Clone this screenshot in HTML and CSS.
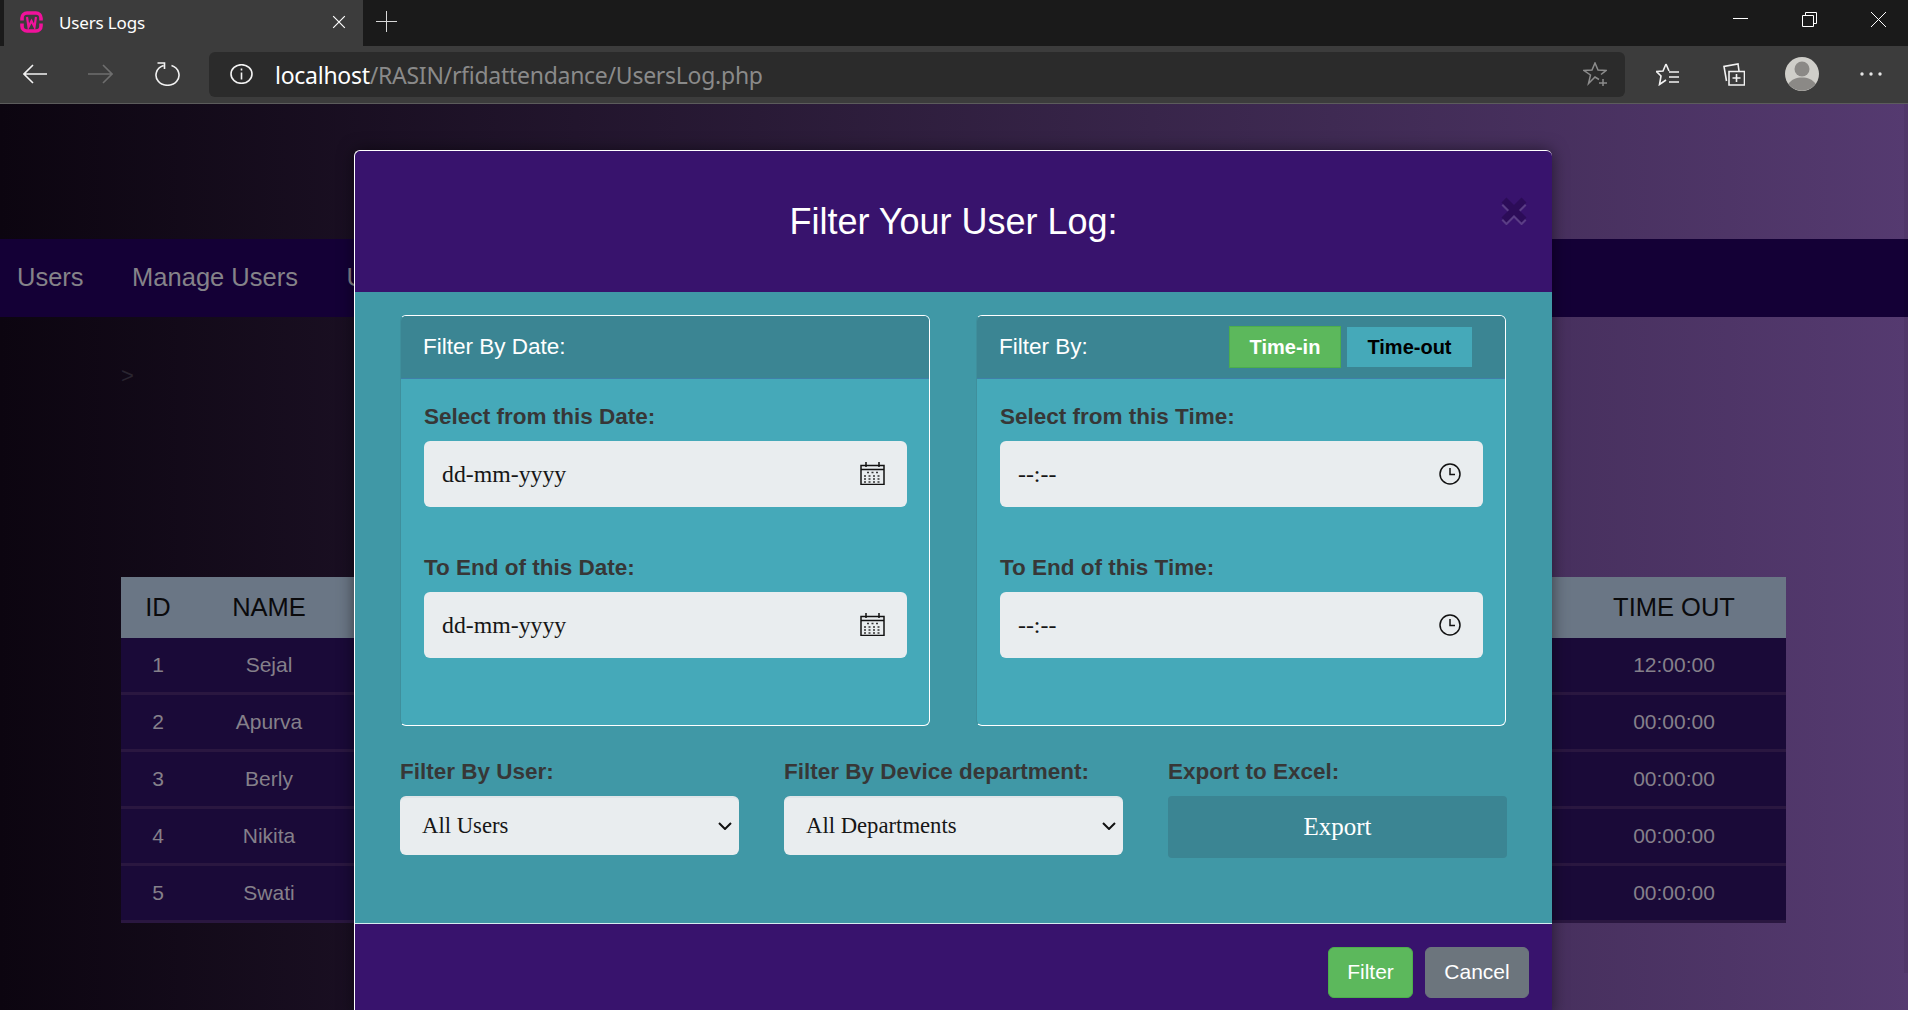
FILE: index.html
```html
<!DOCTYPE html>
<html lang="en">
<head>
<meta charset="utf-8">
<title>Users Logs</title>
<link rel="stylesheet" href="styles.css">
</head>
<body>
<header class="chrome">
  <div class="tabstrip">
    <div class="tab">
      <svg class="favicon" viewBox="0 0 23 22"><path class="fav-ring" d="M2 9.500V7a5 5 0 0 1 5-5h9a5 5 0 0 1 5 5v2.500M2 12.500V15a5 5 0 0 0 5 5h9a5 5 0 0 0 5-5v-2.500"/><path class="fav-w" d="M7 6l1.500 10 3-6 3 6L16 6"/></svg>
      <span class="tab-title">Users Logs</span>
      <svg class="tab-close" viewBox="0 0 12 12"><path class="line-white" d="M1 1l10 10M11 1L1 11"/></svg>
    </div>
    <svg class="new-tab" viewBox="0 0 21 21"><path class="line-light" d="M10.500 0v21M0 10.500h21"/></svg>
    <div class="win-controls">
      <svg class="win-icon" viewBox="0 0 15 15"><path class="line-white" d="M0 6.500h15"/></svg>
      <svg class="win-icon" viewBox="0 0 15 15"><path class="line-white" d="M.5 3.500h11v11H.5zM3.500 3.500V.5h11v11h-3"/></svg>
      <svg class="win-icon" viewBox="0 0 15 15"><path class="line-white" d="M0 0l15 15M15 0L0 15"/></svg>
    </div>
  </div>
  <div class="toolbar">
    <svg class="tb-back" viewBox="0 0 24 20"><path class="line-bright" d="M24 10H1M10 1l-9 9 9 9"/></svg>
    <svg class="tb-forward" viewBox="0 0 25 20"><path class="line-dim" d="M0 10h24M15 1l9 9-9 9"/></svg>
    <svg class="tb-refresh" viewBox="0 0 25 24"><path class="line-bright" d="M8.500 3.500a11.500 10.200 0 1 0 8 0M2.500 1h7v6"/></svg>
    <div class="address">
      <svg class="info" viewBox="0 0 23 20"><ellipse class="line-bright" cx="11.500" cy="10" rx="10.500" ry="9.300"/><path class="line-bright" d="M11.500 8.500v7M11.500 4.500v2"/></svg>
      <span class="url"><span class="url-host">localhost</span>/RASIN/rfidattendance/UsersLog.php</span>
      <svg class="star-add" viewBox="0 0 24 24"><path class="line-gray" d="M16 17.500l-4-2.500-6.500 6.500 2-8.500L1 8.500l8-.5L12 1l3 7 8 .5-5 4M16 21h8M20 17v7"/></svg>
    </div>
    <svg class="tb-fav" viewBox="0 0 23 23"><path class="line-bright" d="M10 1L7 8l-6.500.5L5 13l-1.500 8.500L10 17M10 1l3 7M13 9h10M13 14h10M13 19h10"/></svg>
    <svg class="tb-coll" viewBox="0 0 22 23"><path class="line-bright" d="M6 22V8.500h15.500V22zM13.500 11v8M9.500 15h8M3.500 18L1 3.500 15 1l1 7"/></svg>
    <svg class="tb-avatar" viewBox="0 0 34 34"><circle class="av-bg" cx="17" cy="17" r="17"/><circle class="av-fg" cx="17" cy="12" r="7.500"/><path class="av-fg" d="M3.500 27c3-5 8-6.500 13.500-6.500S27.500 22 30.500 27a17 17 0 0 1-27 0z"/></svg>
    <svg class="tb-more" viewBox="0 0 22 4"><circle class="dot" cx="2" cy="2" r="1.700"/><circle class="dot" cx="11" cy="2" r="1.700"/><circle class="dot" cx="20" cy="2" r="1.700"/></svg>
  </div>
</header>

<main class="page">
  <nav class="nav">
    <span>Users</span>
    <span>Manage Users</span>
    <span>Users Log</span>
  </nav>
  <div class="crumb">&gt;</div>
  <section class="log-table">
    <div class="row row-head"><span>ID</span><span>NAME</span><span></span><span>TIME OUT</span></div>
    <div class="row"><span>1</span><span>Sejal</span><span></span><span>12:00:00</span></div>
    <div class="row"><span>2</span><span>Apurva</span><span></span><span>00:00:00</span></div>
    <div class="row"><span>3</span><span>Berly</span><span></span><span>00:00:00</span></div>
    <div class="row"><span>4</span><span>Nikita</span><span></span><span>00:00:00</span></div>
    <div class="row"><span>5</span><span>Swati</span><span></span><span>00:00:00</span></div>
  </section>
  <div class="scroll-strip"></div>

  <div class="modal">
    <div class="modal-header">
      <h1 class="modal-title">Filter Your User Log:</h1>
      <svg class="modal-close" viewBox="0 0 26 28"><path class="close-shadow" d="M3 6l20 20M23 6L3 26"/><path class="close-main" d="M3 3l20 20M23 3L3 23"/></svg>
    </div>
    <div class="modal-body">
      <div class="panels">
        <section class="panel">
          <div class="panel-head"><span>Filter By Date:</span></div>
          <div class="panel-body">
            <label class="field-label">Select from this Date:</label>
            <div class="field">
              <span>dd-mm-yyyy</span>
              <svg class="cal" viewBox="0 0 25 23"><path class="ico" d="M1 3.500h23v19H1zM1 7.500h23M6 0v5M19 0v5"/><path class="cal-dots" d="M7 10.500h12M4 14h17M4 17h17M4 20h17"/></svg>
            </div>
            <label class="field-label field-label-next">To End of this Date:</label>
            <div class="field">
              <span>dd-mm-yyyy</span>
              <svg class="cal" viewBox="0 0 25 23"><path class="ico" d="M1 3.500h23v19H1zM1 7.500h23M6 0v5M19 0v5"/><path class="cal-dots" d="M7 10.500h12M4 14h17M4 17h17M4 20h17"/></svg>
            </div>
          </div>
        </section>
        <section class="panel">
          <div class="panel-head">
            <span>Filter By:</span>
            <div class="toggle">
              <button class="toggle-in">Time-in</button>
              <button class="toggle-out">Time-out</button>
            </div>
          </div>
          <div class="panel-body">
            <label class="field-label">Select from this Time:</label>
            <div class="field">
              <span>--:--</span>
              <svg class="clock" viewBox="0 0 22 22"><circle class="ico" cx="11" cy="11" r="10"/><path class="ico" d="M11 5v6.500h5"/></svg>
            </div>
            <label class="field-label field-label-next">To End of this Time:</label>
            <div class="field">
              <span>--:--</span>
              <svg class="clock" viewBox="0 0 22 22"><circle class="ico" cx="11" cy="11" r="10"/><path class="ico" d="M11 5v6.500h5"/></svg>
            </div>
          </div>
        </section>
      </div>
      <div class="bottom-row">
        <div>
          <label class="field-label">Filter By User:</label>
          <div class="select"><span>All Users</span><svg class="chev" viewBox="0 0 14 8"><path class="chev-line" d="M1 1l6 6 6-6"/></svg></div>
        </div>
        <div>
          <label class="field-label">Filter By Device department:</label>
          <div class="select"><span>All Departments</span><svg class="chev" viewBox="0 0 14 8"><path class="chev-line" d="M1 1l6 6 6-6"/></svg></div>
        </div>
        <div>
          <label class="field-label">Export to Excel:</label>
          <button class="export">Export</button>
        </div>
      </div>
    </div>
    <div class="modal-footer">
      <button class="btn btn-filter">Filter</button>
      <button class="btn btn-cancel">Cancel</button>
    </div>
  </div>
</main>
</body>
</html>
```

FILE: styles.css
```css
* { box-sizing: border-box; }
html, body { margin: 0; height: 100%; overflow: hidden; }
body {
  display: flex;
  flex-direction: column;
  width: 1908px;
  height: 1010px;
  font-family: "Liberation Sans", Arial, sans-serif;
  background: #0c0510;
}

/* Browser chrome */
.chrome { flex: none; font-family: "Noto Sans", "Open Sans", sans-serif; }
.tabstrip {
  display: flex;
  align-items: center;
  height: 46px;
  padding-left: 4px;
  background: #1a1a1a;
}
.tab {
  display: flex;
  align-items: center;
  width: 359px;
  height: 46px;
  padding: 0 17px 2px 16px;
  background: #3c3c3c;
  color: #fff;
}
.favicon { width: 23px; height: 22px; flex: none; }
.fav-ring { fill: none; stroke: #f0129b; stroke-width: 3.600; }
.fav-w { fill: none; stroke: #f0129b; stroke-width: 2.200; }
.tab-title { margin-left: 16px; font-size: 17px; letter-spacing: -.15px; }
.tab-close { width: 14px; height: 14px; margin-left: auto; }
.new-tab { width: 21px; height: 21px; margin: 0 0 4px 13px; }
.win-controls { display: flex; gap: 54px; margin: 0 0 7px auto; padding-right: 22px; }
.win-icon { width: 15px; height: 15px; }
.line-white, .line-light, .line-bright, .line-dim, .line-gray { fill: none; stroke-width: 1; }
.line-white { stroke: #fff; }
.line-light { stroke: #d8d8d8; }
.line-bright { stroke: #f2f2f2; stroke-width: 1.600; }
.line-dim { stroke: #6e6e6e; stroke-width: 1.600; }
.line-gray { stroke: #8c8c8c; stroke-width: 1.500; }

.toolbar {
  display: flex;
  align-items: center;
  height: 58px;
  padding: 0 0 1px 23px;
  background: #3c3c3c;
  border-bottom: 1px solid #5c5c5c;
}
.tb-back { width: 24px; height: 20px; }
.tb-forward { width: 25px; height: 20px; margin-left: 41px; }
.tb-refresh { width: 25px; height: 24px; margin-left: 42px; }
.address {
  display: flex;
  align-items: center;
  width: 1416px;
  height: 45px;
  margin-left: 29px;
  padding: 0 18px 0 21px;
  background: #2b2b2b;
  border-radius: 6px;
}
.info { width: 23px; height: 20px; flex: none; }
.url {
  margin: 2px 0 0 22px;
  font-size: 23px;
  letter-spacing: -.27px;
  color: #8a8a8a;
  white-space: nowrap;
}
.url-host { color: #fff; }
.star-add { width: 24px; height: 24px; margin-left: auto; }
.tb-fav { width: 23px; height: 23px; margin-left: 31px; }
.tb-coll { width: 22px; height: 23px; margin-left: 44px; }
.tb-avatar { width: 34px; height: 34px; margin-left: 40px; }
.av-bg { fill: #cfcec9; }
.av-fg { fill: #8b8986; }
.tb-more { width: 22px; height: 4px; margin-left: 41px; }
.dot { fill: #e6e6e6; }

/* Dimmed page */
.page {
  position: relative;
  flex: 1;
  overflow: hidden;
  background: linear-gradient(90deg, #0c0510 0%, #553a70 100%);
  padding-top: 135px;
}
.nav {
  display: flex;
  align-items: center;
  gap: 48.500px;
  height: 78px;
  padding: 0 0 1px 17px;
  background: #140036;
  font-size: 25.500px;
  color: #858389;
}
.crumb {
  margin: 47px 0 0 121px;
  font-size: 22px;
  line-height: 24px;
  color: #2a2530;
}
.log-table { margin: 189px 122px 0 121px; }
.row {
  display: grid;
  grid-template-columns: 74px 148px 1fr 224px;
  align-items: center;
  height: 57px;
  background: #1a0a38;
  border-bottom: 3px solid #2a1740;
  text-align: center;
  font-size: 21px;
  color: #85808a;
}
.row-head {
  height: 61px;
  background: #6a7685;
  border-bottom: 0;
  font-size: 25.500px;
  color: #0a0a0c;
}
.scroll-strip {
  position: absolute;
  top: 0;
  right: 0;
  width: 4px;
  height: 869px;
  background: rgba(0, 0, 0, .06);
}

/* Modal */
.modal {
  position: absolute;
  top: 46px;
  left: 354px;
  width: 1198px;
  border-top: 1px solid #fff;
  border-left: 1px solid #fff;
  border-radius: 6px 6px 0 0;
  background: #38136d;
  box-shadow: 0 0 16px rgba(0, 0, 0, .5);
}
.modal-header {
  position: relative;
  display: flex;
  align-items: center;
  justify-content: center;
  height: 141px;
}
.modal-title {
  margin: 0;
  font-size: 36px;
  font-weight: 400;
  color: #fff;
}
.modal-close {
  position: absolute;
  top: 46px;
  right: 25px;
  width: 26px;
  height: 28px;
}
.close-main { fill: none; stroke: #2c0c58; stroke-width: 7; }
.close-shadow { fill: none; stroke: #5a3d85; stroke-width: 7; }
.modal-body {
  height: 632px;
  padding: 23px 45px 0;
  background: #4098a6;
  border-bottom: 1px solid #d5eef0;
}
.panels {
  display: grid;
  grid-template-columns: 530px 530px;
  column-gap: 46px;
}
.panel {
  height: 411px;
  border: 1px solid #fff;
  border-left-color: #3f8f9c;
  border-radius: 6px;
  background: #45a9b9;
  overflow: hidden;
}
.panel-head {
  display: flex;
  align-items: center;
  justify-content: space-between;
  height: 63px;
  padding: 0 33px 0 22px;
  background: #3b8593;
  border-bottom: 1px solid #3f7fa8;
  font-size: 22.500px;
  color: #fff;
}
.panel-body { padding: 25px 22px 0 23px; }
.field-label {
  display: block;
  height: 25px;
  line-height: 25px;
  font-size: 22.500px;
  font-weight: 700;
  color: #373737;
}
.field-label-next { margin-top: 48px; }
.field {
  display: flex;
  align-items: center;
  justify-content: space-between;
  height: 66px;
  margin-top: 12px;
  padding: 0 22px 0 18px;
  background: #e9edef;
  border-radius: 6px;
  font-family: "Liberation Serif", "Times New Roman", serif;
  font-size: 23.800px;
  color: #161616;
}
.cal { width: 25px; height: 23px; margin-bottom: 2px; }
.clock { width: 22px; height: 22px; }
.ico { fill: none; stroke: #111; stroke-width: 1.500; }
.cal-dots { fill: none; stroke: #333; stroke-width: 1.500; stroke-dasharray: 2 2.500; }
.toggle { display: flex; gap: 6px; align-items: center; }
.toggle button {
  height: 40px;
  padding: 0;
  border: 0;
  font-family: "Liberation Sans", Arial, sans-serif;
  font-size: 20px;
  font-weight: 700;
}
.toggle-in {
  width: 112px;
  height: 42px !important;
  background: #5cb85c;
  border: 1px solid #4cae4c !important;
  color: #fff;
}
.toggle-out { width: 125px; background: #45a9b9; color: #000; }
.bottom-row {
  display: grid;
  grid-template-columns: 1fr 1fr 1fr;
  column-gap: 45px;
  margin-top: 33px;
}
.select {
  display: flex;
  align-items: center;
  justify-content: space-between;
  height: 59px;
  margin-top: 12px;
  padding: 0 7px 2px 22px;
  background: #e9edef;
  border-top: 2px solid #e0e5e8;
  border-radius: 6px;
  font-family: "Liberation Serif", "Times New Roman", serif;
  font-size: 22.700px;
  color: #161616;
}
.chev { width: 14px; height: 8px; }
.chev-line { fill: none; stroke: #111; stroke-width: 2; }
.export {
  display: block;
  width: 100%;
  height: 62px;
  margin-top: 12px;
  border: 0;
  border-radius: 4px;
  background: #3b8593;
  font-family: "Liberation Serif", "Times New Roman", serif;
  font-size: 25px;
  color: #fff;
}
.modal-footer {
  display: flex;
  justify-content: flex-end;
  gap: 12px;
  height: 92px;
  padding: 23px 23px 0 0;
}
.btn {
  height: 51px;
  padding: 0 0 2px;
  border-radius: 6px;
  font-family: "Liberation Sans", Arial, sans-serif;
  font-size: 21px;
  color: #fff;
}
.btn-filter { width: 85px; background: #5cb85c; border: 1px solid #4cae4c; }
.btn-cancel { width: 104px; background: #6c757d; border: 1px solid #6c757d; }
```
